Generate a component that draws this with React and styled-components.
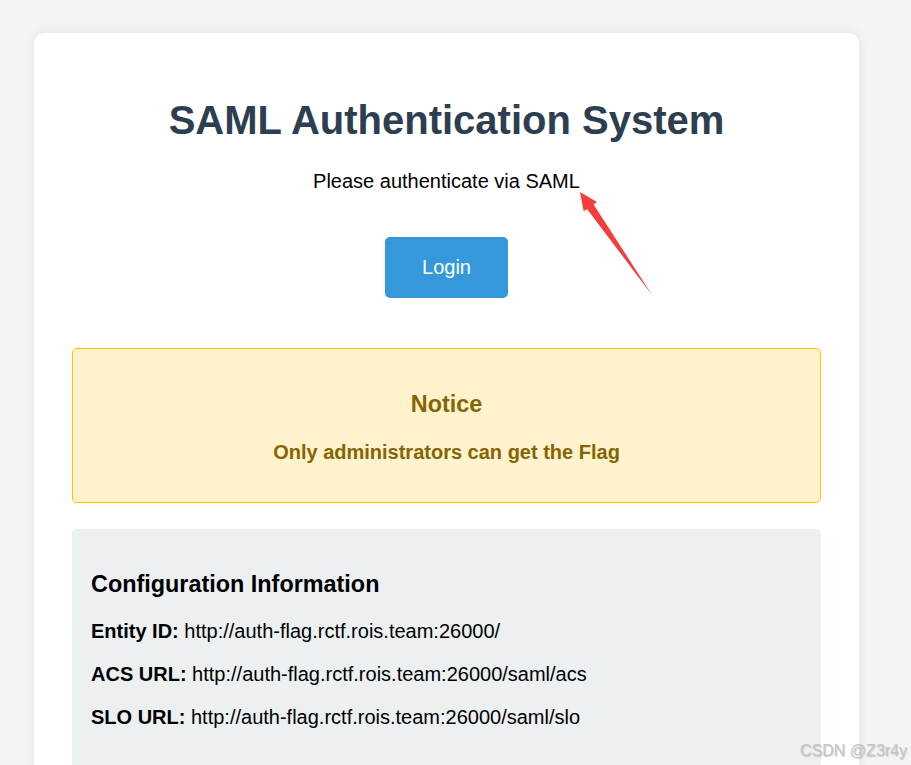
import React from "react";
import styled, { createGlobalStyle } from "styled-components";

const GlobalStyle = createGlobalStyle`
  html, body {
    margin: 0;
    padding: 0;
    height: 100%;
    overflow: hidden;
    background: #f4f4f4;
    font-family: "Liberation Sans", Arial, sans-serif;
    color: #000;
  }
`;

const config = [
  { label: "Entity ID:", value: "http://auth-flag.rctf.rois.team:26000/" },
  { label: "ACS URL:", value: "http://auth-flag.rctf.rois.team:26000/saml/acs" },
  { label: "SLO URL:", value: "http://auth-flag.rctf.rois.team:26000/saml/slo" }
];

export default function App() {
  return (
    <Page>
      <GlobalStyle />
      <Card>
        <Title>SAML Authentication System</Title>
        <Subtitle>Please authenticate via SAML</Subtitle>
        <ButtonRow>
          <LoginButton>Login</LoginButton>
        </ButtonRow>
        <Notice>
          <NoticeTitle>Notice</NoticeTitle>
          <NoticeText>Only administrators can get the Flag</NoticeText>
        </Notice>
        <ConfigBox>
          <ConfigTitle>Configuration Information</ConfigTitle>
          {config.map(item => (
            <ConfigLine key={item.label}>
              <strong>{item.label}</strong> {item.value}
            </ConfigLine>
          ))}
        </ConfigBox>
      </Card>

      {/* annotation arrow */}
      <Arrow width="911" height="765" viewBox="0 0 911 765">
        <polygon
          points="580,192 597,202 593.6,204.4 652,295 587,209 583.7,211.3"
          fill="#f33c3c"
        />
      </Arrow>
      <Watermark>CSDN @Z3r4y</Watermark>
    </Page>
  );
}

const Page = styled.div`
  position: relative;
  height: 765px;
  padding: 33px 0 0 34px;
  box-sizing: border-box;
`;

const Card = styled.div`
  width: 825px;
  box-sizing: border-box;
  padding: 38px;
  background: #fff;
  border-radius: 10px;
  box-shadow: 0 0 12px rgba(0, 0, 0, 0.08);
`;

const Title = styled.h1`
  margin: 27px 0;
  text-align: center;
  font-size: 40px;
  font-weight: bold;
  color: #2c3e50;
`;

const Subtitle = styled.p`
  margin: 26px 0 0;
  text-align: center;
  font-size: 20px;
  line-height: 23px;
`;

const ButtonRow = styled.div`
  display: flex;
  justify-content: center;
  margin: 44px 0 50px;
`;

const LoginButton = styled.button`
  height: 61px;
  padding: 0 37px;
  border: none;
  border-radius: 5px;
  background: #3498db;
  color: #fff;
  font-family: inherit;
  font-size: 20px;
  cursor: pointer;
`;

const Notice = styled.div`
  padding: 19px;
  border: 1px solid #ffc107;
  border-radius: 5px;
  background: #fff3cd;
  color: #856404;
  text-align: center;
  margin-bottom: 26px;
`;

const NoticeTitle = styled.h3`
  margin: 23px 0;
  font-size: 23.4px;
  line-height: 27px;
`;

const NoticeText = styled.p`
  margin: 19px 0;
  font-size: 20px;
  line-height: 23px;
  font-weight: bold;
`;

const ConfigBox = styled.div`
  padding: 19px;
  border-radius: 5px;
  background: #ecf0f1;
`;

const ConfigTitle = styled.h3`
  margin: 23px 0 22px;
  font-size: 23.4px;
  line-height: 27px;
`;

const ConfigLine = styled.p`
  margin: 20px 0;
  font-size: 20px;
  line-height: 23px;
`;

const Arrow = styled.svg`
  position: absolute;
  left: 0;
  top: 0;
  pointer-events: none;
`;

const Watermark = styled.div`
  position: absolute;
  right: 4px;
  bottom: 5px;
  font-size: 16px;
  color: #c4c4c4;
  text-shadow: 1px 1px 1px rgba(0, 0, 0, 0.18);
`;
